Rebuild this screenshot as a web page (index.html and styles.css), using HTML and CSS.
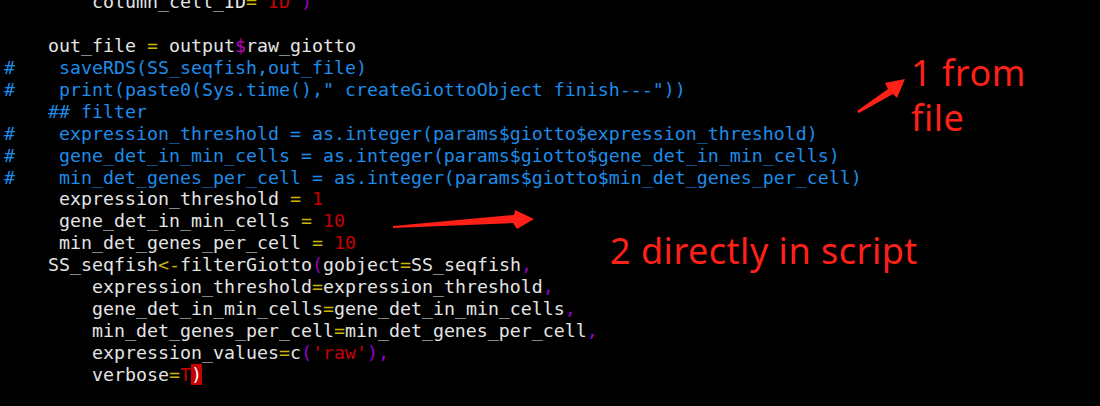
FILE: index.html
```html
<!DOCTYPE html>
<html>
<head>
<meta charset="utf-8">
<link rel="stylesheet" href="styles.css">
</head>
<body>
<div class="screen">
<pre class="code"><span class="ln">        column_cell_ID<span class="op">=</span><span class="str">'ID'</span><span class="dl">)</span></span>
<span class="ln"> </span>
<span class="ln">    out_file <span class="op">=</span> output<span class="dol">$</span>raw_giotto</span>
<span class="ln cm">#    saveRDS(SS_seqfish,out_file)</span>
<span class="ln cm">#    print(paste0(Sys.time()," createGiottoObject finish---"))</span>
<span class="ln cm">    ## filter</span>
<span class="ln cm">#    expression_threshold = as.integer(params$giotto$expression_threshold)</span>
<span class="ln cm">#    gene_det_in_min_cells = as.integer(params$giotto$gene_det_in_min_cells)</span>
<span class="ln cm">#    min_det_genes_per_cell = as.integer(params$giotto$min_det_genes_per_cell)</span>
<span class="ln">     expression_threshold <span class="op">=</span> <span class="num">1</span></span>
<span class="ln">     gene_det_in_min_cells <span class="op">=</span> <span class="num">10</span></span>
<span class="ln">     min_det_genes_per_cell <span class="op">=</span> <span class="num">10</span></span>
<span class="ln">    SS_seqfish<span class="op">&lt;-</span>filterGiotto<span class="dl">(</span>gobject<span class="op">=</span>SS_seqfish<span class="dl">,</span></span>
<span class="ln">        expression_threshold<span class="op">=</span>expression_threshold<span class="dl">,</span></span>
<span class="ln">        gene_det_in_min_cells<span class="op">=</span>gene_det_in_min_cells<span class="dl">,</span></span>
<span class="ln">        min_det_genes_per_cell<span class="op">=</span>min_det_genes_per_cell<span class="dl">,</span></span>
<span class="ln">        expression_values<span class="op">=</span>c<span class="dl">(</span><span class="str">'raw'</span><span class="dl">),</span></span>
<span class="ln">        verbose<span class="op">=</span><span class="num">T</span><span class="match">)</span></span></pre>

<svg class="arrows" width="1100" height="406" viewBox="0 0 1100 406" aria-hidden="true">
  <polygon class="arrow" points="857,111 888,89 885,83 905,79 897,98 893,94 859,113"/>
  <polygon class="arrow" points="393,226 514,215 515,210 534,219 517,229 513,223 393,228"/>
</svg>
<div class="note note-file">1 from<br>file</div>
<div class="note note-script">2 directly in script</div>
</div>
</body>
</html>
```

FILE: styles.css
```css
html, body {
  margin: 0;
  padding: 0;
  background: #000;
}

.screen {
  position: relative;
  width: 1100px;
  height: 406px;
  overflow: hidden;
  background: #000;
}

.code {
  margin: -9px 0 0 0;
  padding: 0 0 0 4px;
  font-family: "DejaVu Sans Mono", monospace;
  font-size: 18.27px;
  line-height: 21.93px;
  color: #e4e4e4;
  white-space: pre;
}

.cm { color: #1e8ce8; }
.op { color: #ccb400; }
.num { color: #c80000; }
.str { color: #c80000; }
.dl { color: #9800cc; }
.dol { color: #c000c0; }
.match {
  background: #c40000;
  color: #ffffff;
}

.arrows {
  position: absolute;
  left: 0;
  top: 0;
}

.arrow {
  fill: #ff2018;
}

.note {
  position: absolute;
  color: #ff2018;
  font-family: "Noto Sans", "Open Sans", sans-serif;
  font-size: 36px;
  line-height: 45px;
  letter-spacing: 0.5px;
  white-space: nowrap;
}

.note-file {
  left: 911px;
  top: 50px;
}

.note-script {
  left: 610px;
  top: 228px;
}
```
